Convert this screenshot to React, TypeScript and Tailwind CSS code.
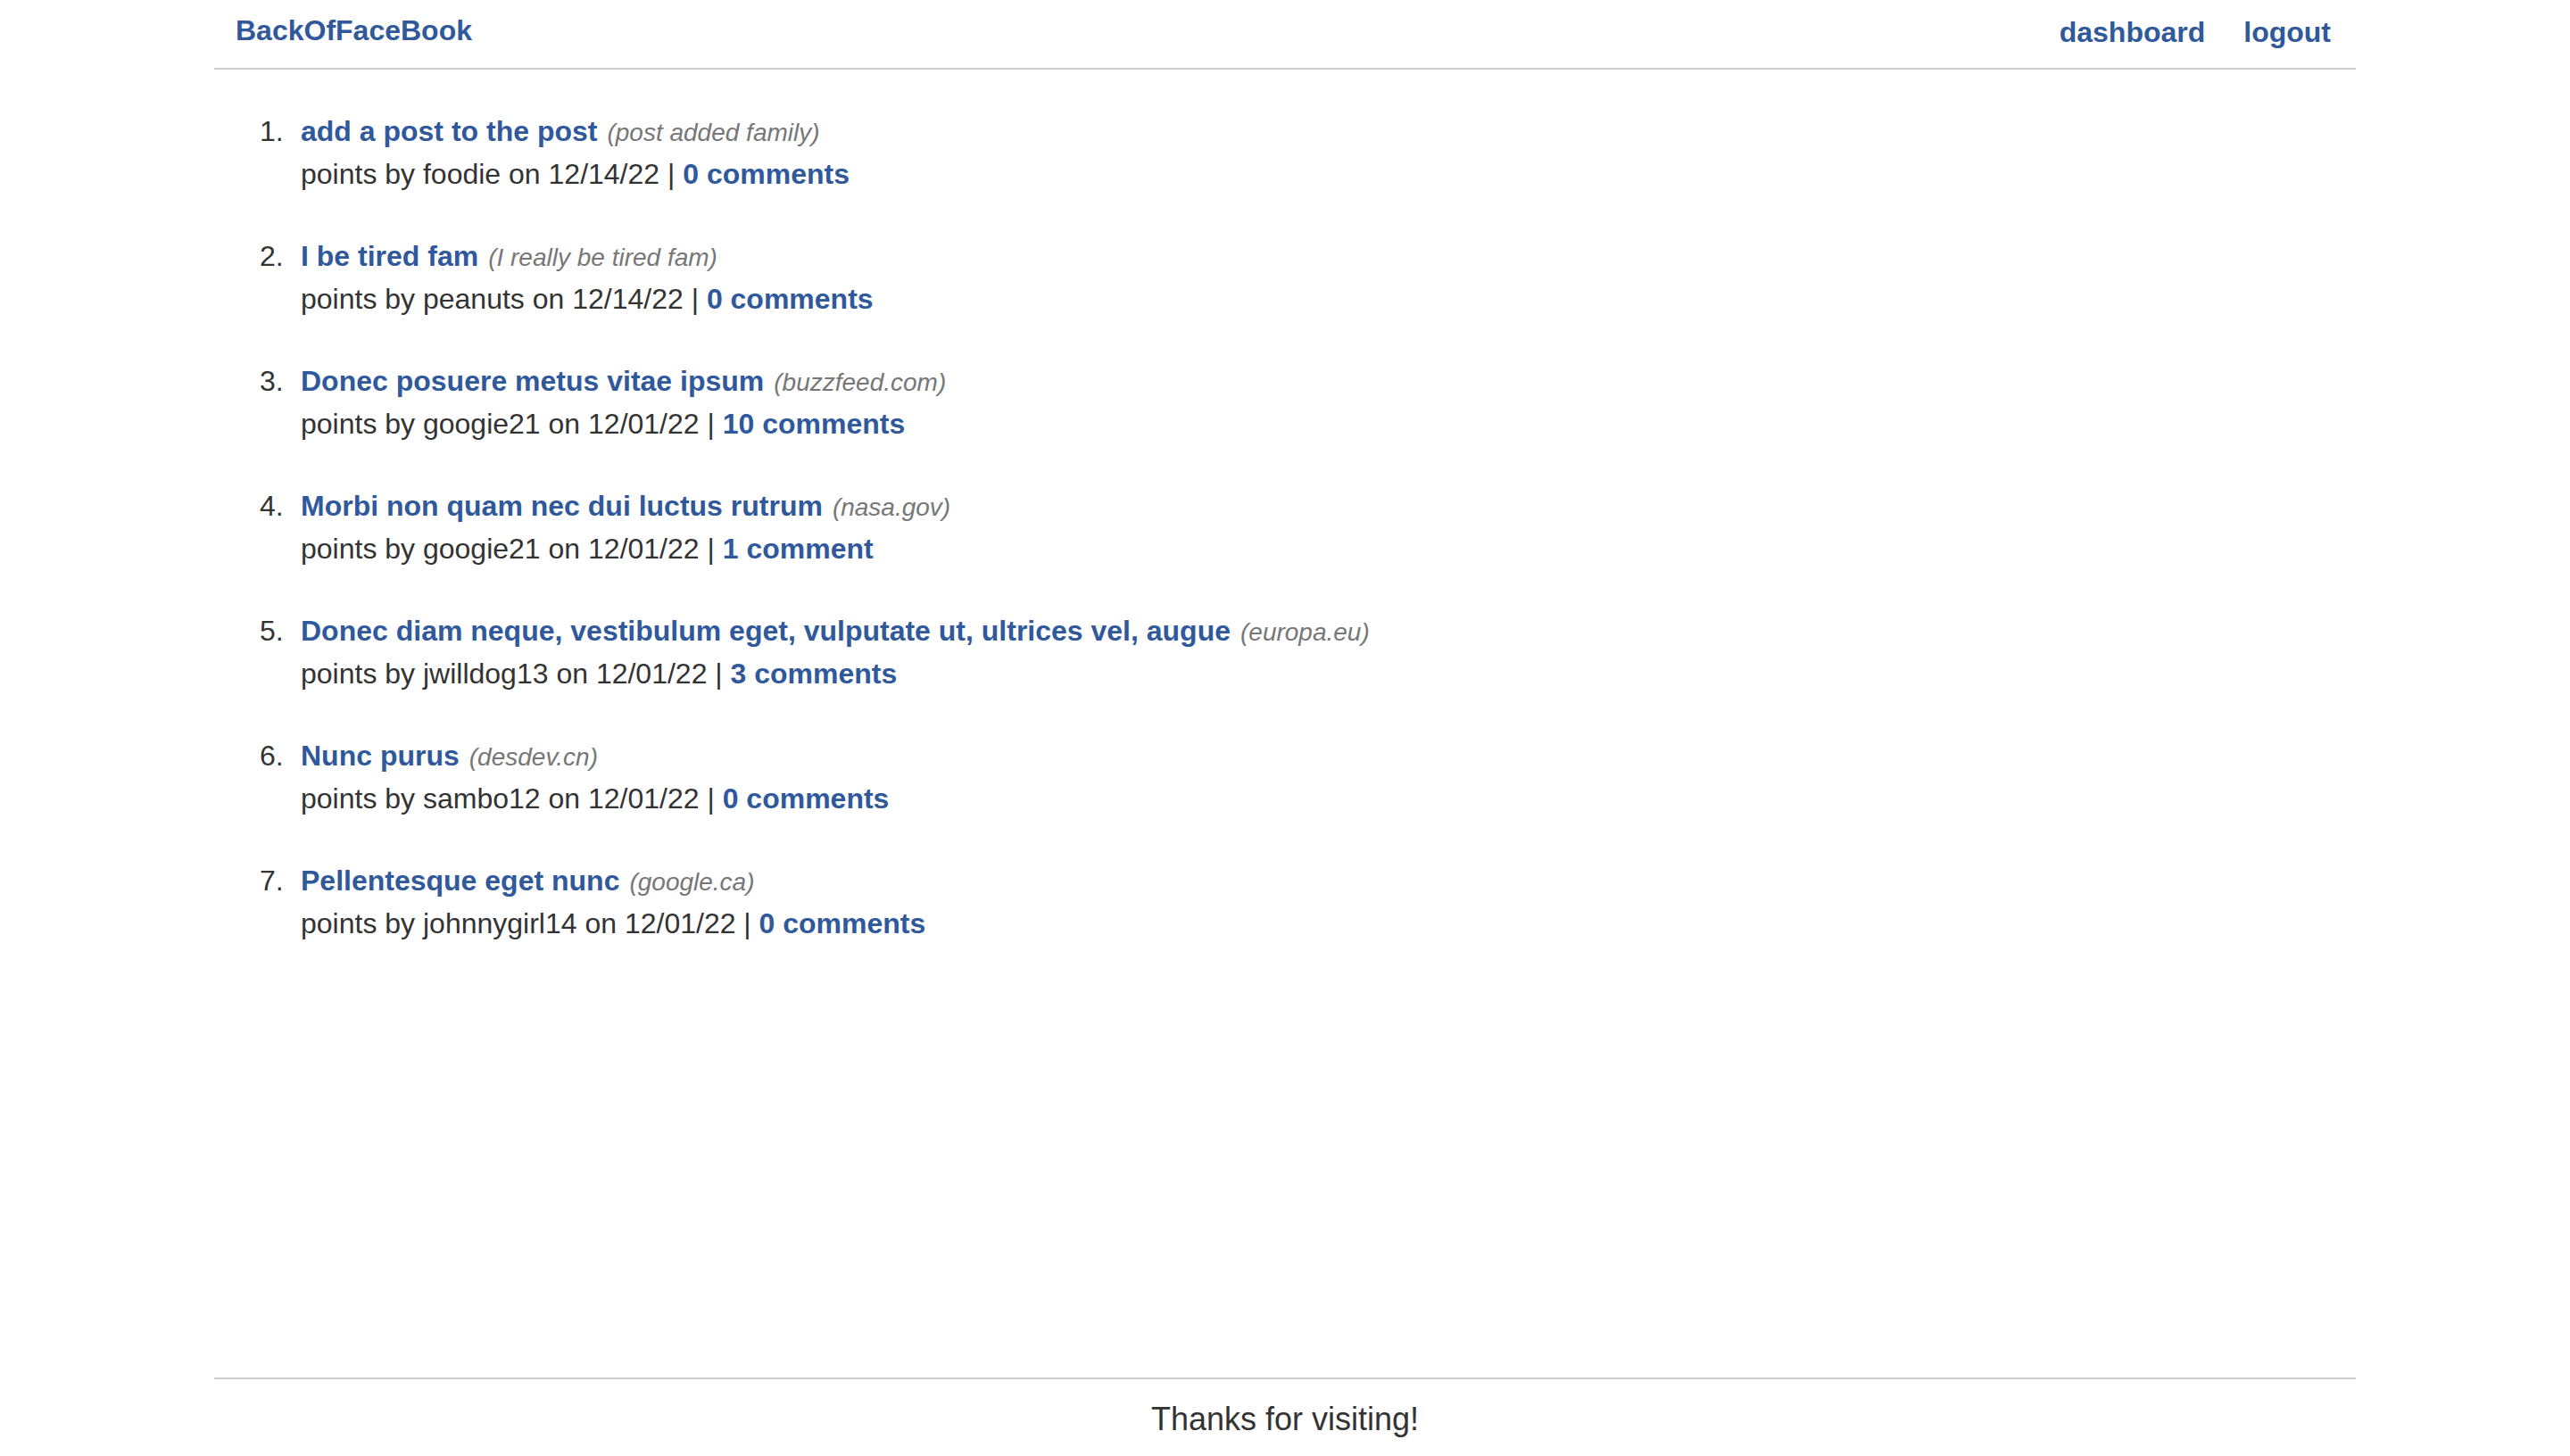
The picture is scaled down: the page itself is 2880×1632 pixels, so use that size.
const posts = [
  { id: 1, title: 'add a post to the post', source: 'post added family', author: 'foodie', date: '12/14/22', comments: 0 },
  { id: 2, title: 'I be tired fam', source: 'I really be tired fam', author: 'peanuts', date: '12/14/22', comments: 0 },
  { id: 3, title: 'Donec posuere metus vitae ipsum', source: 'buzzfeed.com', author: 'googie21', date: '12/01/22', comments: 10 },
  { id: 4, title: 'Morbi non quam nec dui luctus rutrum', source: 'nasa.gov', author: 'googie21', date: '12/01/22', comments: 1 },
  { id: 5, title: 'Donec diam neque, vestibulum eget, vulputate ut, ultrices vel, augue', source: 'europa.eu', author: 'jwilldog13', date: '12/01/22', comments: 3 },
  { id: 6, title: 'Nunc purus', source: 'desdev.cn', author: 'sambo12', date: '12/01/22', comments: 0 },
  { id: 7, title: 'Pellentesque eget nunc', source: 'google.ca', author: 'johnnygirl14', date: '12/01/22', comments: 0 },
];

export default function App() {
  return (
    <div className="min-h-screen bg-white font-['Liberation_Sans',Arial,sans-serif] text-[#333]">
      <div className="mx-auto flex min-h-screen w-[2400px] flex-col">
        <header className="flex items-start justify-between border-b-2 border-[#ccc] pt-[10px] pb-[16px] pl-[24px] pr-[28px]">
          <a href="#" className="text-[32px] font-bold leading-[48px] text-[#30599c]">
            BackOfFaceBook
          </a>
          <nav className="flex gap-[43px] pt-[2px] text-[32px] font-bold leading-[48px] text-[#30599c]">
            <a href="#">dashboard</a>
            <a href="#">logout</a>
          </nav>
        </header>

        <main className="flex-1 pt-[45px] pl-[51px]">
          <ol>
            {posts.map((post, i) => (
              <li key={post.id} className="mb-[44px] flex text-[32px] leading-[48px]">
                <span className="w-[46px] shrink-0">{i + 1}.</span>
                <div>
                  <div>
                    <a href="#" className="font-bold text-[#30599c]">{post.title}</a>
                    <span className="ml-[11px] text-[28px] italic leading-none text-[#777]">({post.source})</span>
                  </div>
                  <div>
                    points by {post.author} on {post.date} |{' '}
                    <a href="#" className="font-bold text-[#30599c]">
                      {post.comments} {post.comments === 1 ? 'comment' : 'comments'}
                    </a>
                  </div>
                </div>
              </li>
            ))}
          </ol>
        </main>

        <footer className="border-t-2 border-[#ccc] pt-[18px] pb-[14px] text-center text-[36px] leading-[54px]">
          Thanks for visiting!
        </footer>
      </div>
    </div>
  );
}
